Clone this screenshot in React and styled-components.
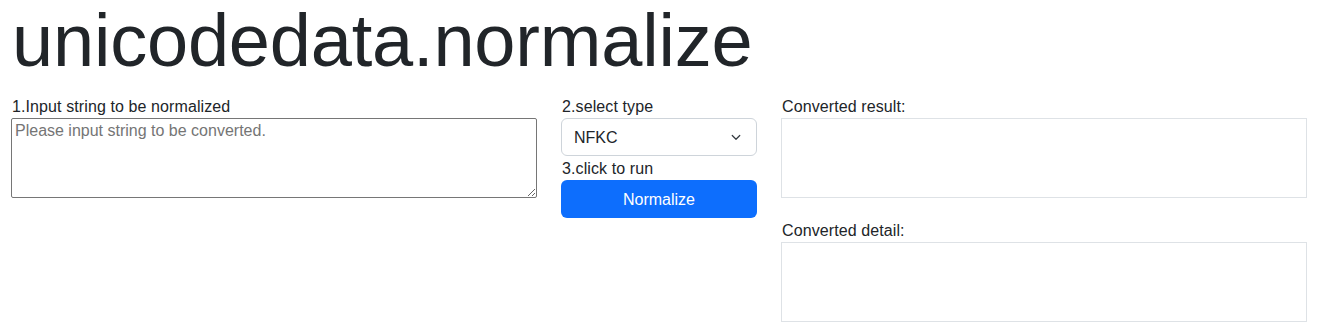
import styled, { createGlobalStyle } from "styled-components";

const GlobalStyle = createGlobalStyle`
  body {
    margin: 0;
    background: #fff;
    color: #212529;
    font-family: "Liberation Sans", Arial, sans-serif;
    font-size: 16px;
    line-height: 24px;
  }
  * { box-sizing: border-box; }
`;

const Page = styled.main`
  padding: 0 11px;
`;

const Title = styled.h1`
  margin: 0 0 13px;
  padding-left: 1px;
  font-size: 74px;
  font-weight: 400;
  line-height: 81px;
  letter-spacing: -0.2px;
`;

const Row = styled.div`
  display: grid;
  grid-template-columns: 526px 196px 526px;
  column-gap: 24px;
  align-items: start;
`;

const Col = styled.div`
  display: flex;
  flex-direction: column;
`;

const Label = styled.label`
  display: block;
  padding: 1px 0 0 1px;
  height: 24px;
  line-height: 24px;
  letter-spacing: 0.1px;
  margin-top: ${(p) => p.$gap || 0}px;
`;

const Input = styled.textarea`
  display: block;
  width: 526px;
  height: 80px;
  margin: 0;
  padding: 2px 3px;
  border: 1px solid #767676;
  border-radius: 2px;
  font-family: "Liberation Sans", Arial, sans-serif;
  font-size: 16px;
  line-height: 19px;
  color: #212529;
  &::placeholder { color: #757575; }
`;

const SelectWrap = styled.div`
  position: relative;
  height: 38px;
`;

const Select = styled.select`
  appearance: none;
  width: 100%;
  height: 38px;
  padding: 1px 36px 0 12px;
  border: 1px solid #ced4da;
  border-radius: 6px;
  background: #fff;
  color: #212529;
  font-family: "Liberation Sans", Arial, sans-serif;
  font-size: 16px;
`;

const Chevron = styled.svg`
  position: absolute;
  right: 14px;
  top: 13px;
  width: 14px;
  height: 12px;
  pointer-events: none;
`;

const Button = styled.button`
  height: 38px;
  width: 100%;
  padding-top: 2px;
  border: none;
  border-radius: 6px;
  background: #0d6efd;
  color: #fff;
  font-family: "Liberation Sans", Arial, sans-serif;
  font-size: 16px;
`;

const Output = styled.div`
  height: 80px;
  border: 1px solid #dee2e6;
`;

export default function App() {
  return (
    <>
      <GlobalStyle />
      <Page>
        <Title>unicodedata.normalize</Title>
        <Row>
          <Col>
            <Label>1.Input string to be normalized</Label>
            <Input placeholder="Please input string to be converted." />
          </Col>
          <Col>
            <Label>2.select type</Label>
            <SelectWrap>
              <Select defaultValue="NFKC">
                <option>NFC</option>
                <option>NFKC</option>
                <option>NFD</option>
                <option>NFKD</option>
              </Select>
              <Chevron viewBox="0 0 16 16">
                <path
                  d="m3 6 5 5 5-5"
                  fill="none"
                  stroke="#343a40"
                  strokeWidth="1.6"
                  strokeLinecap="round"
                  strokeLinejoin="round"
                />
              </Chevron>
            </SelectWrap>
            <Label>3.click to run</Label>
            <Button>Normalize</Button>
          </Col>
          <Col>
            <Label>Converted result:</Label>
            <Output />
            <Label $gap={20}>Converted detail:</Label>
            <Output />
          </Col>
        </Row>
      </Page>
    </>
  );
}
